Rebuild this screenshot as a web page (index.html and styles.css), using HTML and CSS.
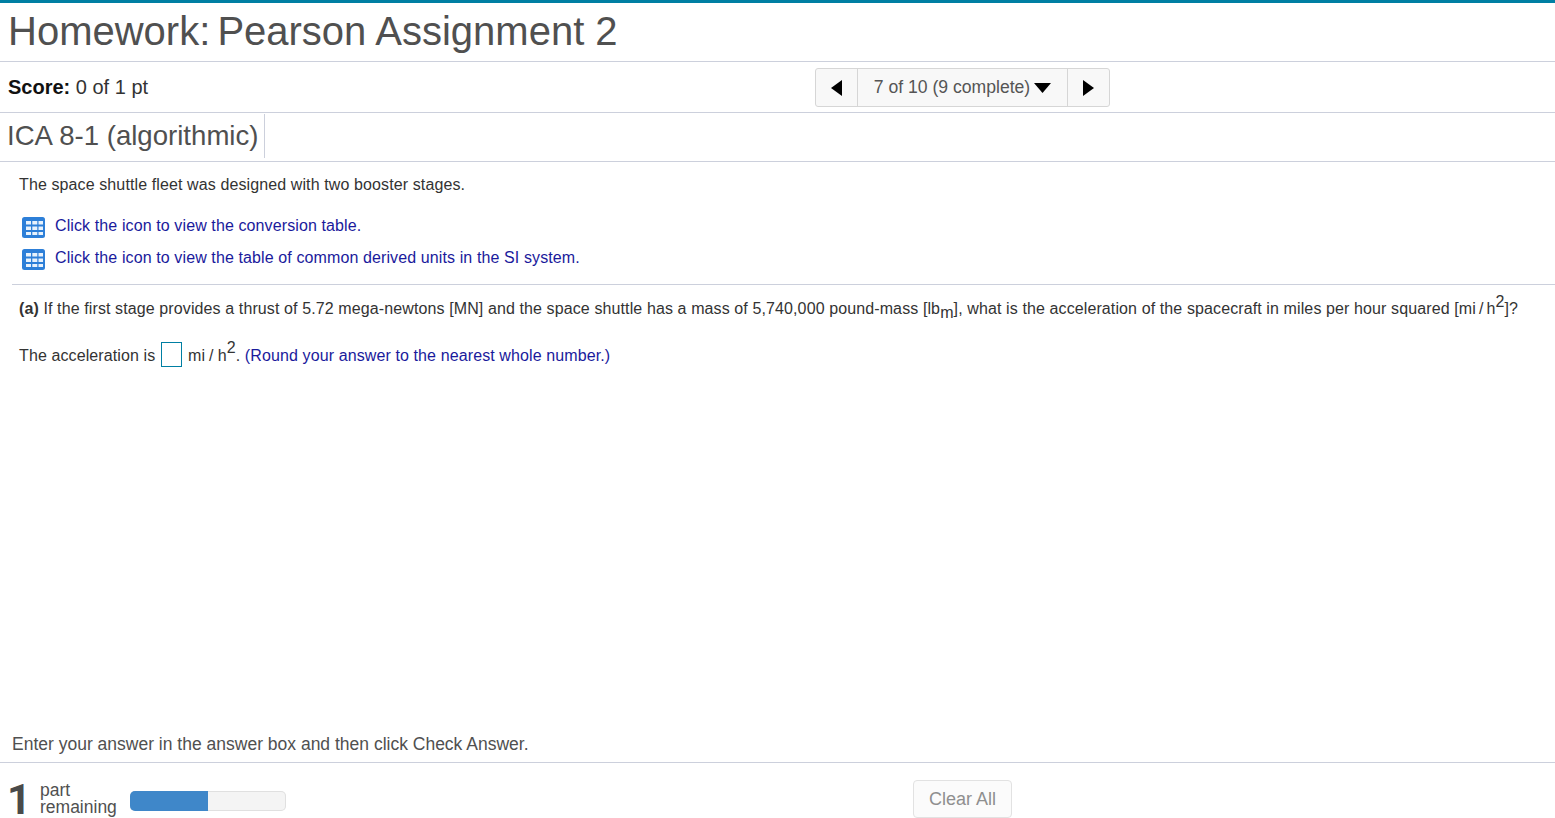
FILE: index.html
```html
<!DOCTYPE html>
<html lang="en">
<head>
<meta charset="utf-8">
<title>Homework: Pearson Assignment 2</title>
<link rel="stylesheet" href="styles.css">
</head>
<body>
<div class="page">
  <header class="title-bar"><h1 class="title"><span class="title-lead">Homework:</span> Pearson Assignment 2</h1></header>
  <div class="score-bar">
    <div class="score"><b>Score:</b> 0 of 1 pt</div>
    <div class="pager">
      <button class="pager-arrow" aria-label="Previous"><svg width="11" height="16" viewBox="0 0 11 16"><path d="M11 0V16L0 8Z"/></svg></button>
      <button class="pager-mid">7 of 10 (9 complete)<svg class="caret" width="17" height="10" viewBox="0 0 17 10"><path d="M0 0H17L8.5 10Z"/></svg></button>
      <button class="pager-arrow" aria-label="Next"><svg width="11" height="16" viewBox="0 0 11 16"><path d="M0 0V16L11 8Z"/></svg></button>
    </div>
  </div>
  <div class="question-bar"><h2 class="question-title">ICA 8-1 (algorithmic)</h2></div>
  <main class="content">
    <p class="intro">The space shuttle fleet was designed with two booster stages.</p>
    <div class="links">
      <a class="link-row"><svg class="table-icon" width="23" height="21" viewBox="0 0 23 21"><rect width="23" height="21" rx="2.5" fill="#2d7fd8"/><g fill="#e8f2fc"><rect x="4" y="4" width="5" height="3.5"/><rect x="10.3" y="4" width="5" height="3.5"/><rect x="16.5" y="4" width="4.5" height="3.5"/><rect x="4" y="9.5" width="5" height="3.5"/><rect x="10.3" y="9.5" width="5" height="3.5"/><rect x="16.5" y="9.5" width="4.5" height="3.5"/><rect x="4" y="15" width="5" height="3"/><rect x="10.3" y="15" width="5" height="3"/><rect x="16.5" y="15" width="4.5" height="3"/></g></svg><span>Click the icon to view the conversion table.</span></a>
      <a class="link-row"><svg class="table-icon" width="23" height="21" viewBox="0 0 23 21"><rect width="23" height="21" rx="2.5" fill="#2d7fd8"/><g fill="#e8f2fc"><rect x="4" y="4" width="5" height="3.5"/><rect x="10.3" y="4" width="5" height="3.5"/><rect x="16.5" y="4" width="4.5" height="3.5"/><rect x="4" y="9.5" width="5" height="3.5"/><rect x="10.3" y="9.5" width="5" height="3.5"/><rect x="16.5" y="9.5" width="4.5" height="3.5"/><rect x="4" y="15" width="5" height="3"/><rect x="10.3" y="15" width="5" height="3"/><rect x="16.5" y="15" width="4.5" height="3"/></g></svg><span>Click the icon to view the table of common derived units in the SI system.</span></a>
    </div>
    <hr class="rule">
    <p class="part"><b>(a)</b> If the first stage provides a thrust of 5.72 mega-newtons [MN] and the space shuttle has a mass of 5,740,000 pound-mass [lb<sub>m</sub>], what is the acceleration of the spacecraft in miles per hour squared [mi<span class="thin">/</span>h<sup>2</sup>]?</p>
    <p class="answer">The acceleration is <span class="answer-box"></span> mi<span class="thin">/</span>h<sup>2</sup>. <span class="hint">(Round your answer to the nearest whole number.)</span></p>
  </main>
  <p class="instruction">Enter your answer in the answer box and then click Check Answer.</p>
  <footer class="footer">
    <div class="parts">
      <span class="parts-num">1</span>
      <span class="parts-label">part<br>remaining</span>
      <div class="progress"><div class="progress-fill" style="width:50%"></div></div>
    </div>
    <button class="clear">Clear All</button>
  </footer>
</div>
</body>
</html>
```
FILE: styles.css
```css
* { box-sizing: border-box; }
html, body { margin: 0; padding: 0; }
body { font-family: "Liberation Sans", Arial, sans-serif; background: #fff; color: #4a4a4a; overflow: hidden; }
.page { height: 818px; display: flex; flex-direction: column; border-top: 3px solid #007fa3; overflow: hidden; }
.title-bar { height: 59px; border-bottom: 1px solid #ccd0dc; padding-left: 8px; flex: none; }
.title { margin: 0; font-size: 40px; font-weight: 400; line-height: 56px; color: #505050; }
.title-lead { margin-right: -4px; }
.score-bar { height: 51px; border-bottom: 1px solid #ccd0dc; flex: none; display: flex; align-items: center; padding-left: 8px; }
.score { font-size: 20px; color: #333; width: 807px; flex: none; }
.score b { color: #111; }
.pager { display: flex; height: 39px; border: 1px solid #d6d6d6; border-radius: 3px; background: #f8f8f8; margin-top: 1px; }
.pager button { border: 0; background: none; padding: 0; font: inherit; display: flex; align-items: center; justify-content: center; }
.pager-arrow { width: 41px; }
.pager-arrow svg { fill: #000; }
.pager .pager-mid { width: 211px; border-left: 1px solid #d6d6d6; border-right: 1px solid #d6d6d6; font-size: 17.6px; color: #555; gap: 4px; }
.caret { fill: #000; }
.question-bar { height: 49px; border-bottom: 1px solid #ccd0dc; flex: none; padding-left: 7px; display: flex; align-items: flex-start; }
.question-title { margin: 1px 0 0; font-size: 27.6px; font-weight: 400; line-height: 44px; padding-right: 6px; border-right: 1px solid #ccd0dc; color: #505050; }
.content { flex: 1; padding: 0 0 0 19px; font-size: 16px; color: #333; letter-spacing: 0.11px; }
.intro { margin: 13px 0 0; line-height: 20px; }
.links { margin: 20px 0 0 3px; display: flex; flex-direction: column; gap: 11px; }
.link-row { display: flex; align-items: flex-start; gap: 10px; color: #1a1a9c; line-height: 21px; height: 21px; }
.table-icon { margin-top: 2px; flex: none; }
.rule { border: 0; border-top: 1px solid #ccd0dc; margin: 16px 0 0 -7px; }
.part { margin: 14px 0 0; line-height: 20px; white-space: nowrap; }
.part sup { font-size: 16px; line-height: 0; vertical-align: 7px; }
.answer sup { font-size: 16px; line-height: 0; vertical-align: 8px; }
.part sub { font-size: 16px; line-height: 0; vertical-align: -4px; }
.thin { margin: 0 3px; }
.answer { margin: 23px 0 0; line-height: 24px; height: 24px; white-space: nowrap; }
.answer .thin { margin: 0 4px; }
.answer-box { display: inline-block; width: 21px; height: 25px; border: 1px solid #007fa3; vertical-align: -6px; margin: 0 1.5px 0 1px; }
.hint { color: #1a1a9c; }
.instruction { margin: 0 0 0 12px; font-size: 17.5px; line-height: 24px; color: #505050; flex: none; }
.footer { flex: none; height: 56px; margin-top: 6px; border-top: 1px solid #ccd0dc; display: flex; padding-left: 8px; }
.parts { display: flex; width: 905px; flex: none; align-items: flex-start; }
.parts-num { font-family: Roboto, "Liberation Sans", sans-serif; font-size: 42px; font-weight: 700; line-height: 32px; width: 33px; margin-left: -1px; color: #4a4a4a; margin-top: 21px; }
.parts-label { font-size: 17.5px; line-height: 17px; margin-top: 19px; color: #505050; width: 90px; }
.progress { width: 156px; height: 20px; background: #f4f4f4; box-shadow: inset 0 0 0 1px #e0e0e0; border-radius: 5px; margin-top: 28px; overflow: hidden; }
.progress-fill { height: 100%; background: #3f87c9; }
.clear { width: 99px; height: 38px; margin-top: 17px; background: #fbfbfb; border: 1px solid #e2e2e2; border-radius: 4px; font: 18px "Liberation Sans", Arial, sans-serif; color: #8f8f8f; padding: 0; }
```
